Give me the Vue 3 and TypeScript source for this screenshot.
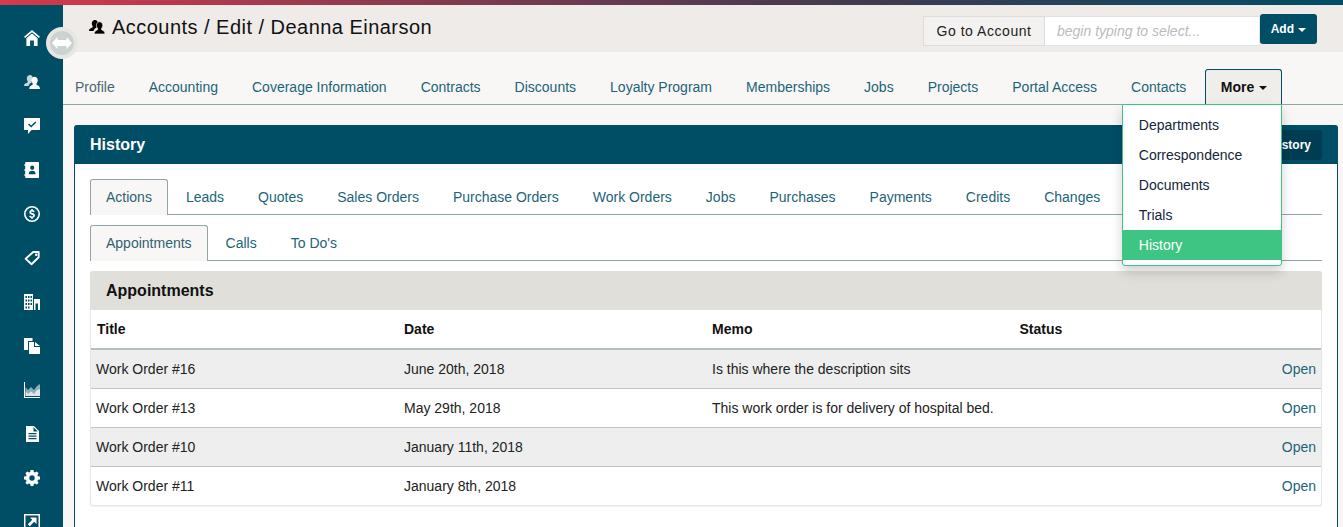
<script setup lang="ts">
interface SideIcon {
  name: string
  box: string
  paths: { d: string; fill?: string; opacity?: number; evenodd?: boolean; stroke?: number }[]
}

const usersLeft = 'M6 0c1.700 0 2.900 1.400 2.900 3.200 0 1-.4 2-1 2.800-.4.500-.4 1 0 1.400-1.700.5-2.900 1.700-3.300 3.600H0c0-1.700 1-2.300 2.400-2.900.9-.4 1.300-.7 1.400-1.100.1-.4-.1-.6-.3-1C3 5.300 2.800 4.300 2.800 3.300 2.800 1.400 4.300 0 6 0z'
const usersRight = 'M10.500 1.800c1.900 0 3.300 1.600 3.300 3.500 0 1.100-.4 2.200-1.100 3-.5.600-.4 1.300.2 1.600 1.600.8 3.100 1.300 3.100 4.100H5.200c0-2.800 1.500-3.300 3.100-4.100.6-.3.700-1 .2-1.600-.7-.8-1.100-1.900-1.100-3 0-1.900 1.300-3.500 3.100-3.500z'

const sideIcons: SideIcon[] = [
  { name: 'home', box: '0 0 16 16', paths: [{ d: 'M8 0 16 6.800 14.900 8.100 8 2.200 1.100 8.100 0 6.800z' }, { d: 'M8 3.600 13.600 8.300V16H9.900V10.500H6.100V16H2.400V8.300z' }] },
  { name: 'users', box: '0 0 16 14', paths: [{ d: usersLeft, opacity: 0.78 }, { d: usersRight }] },
  { name: 'check', box: '0 0 16 16', paths: [{ d: 'M.5 0h15c.3 0 .5.200.5.500V11.500c0 .3-.2.500-.5.500H7.500L4 16V12H.5C.2 12 0 11.800 0 11.500V.5C0 .2.200 0 .5 0zM11.300 3.600 7.200 7.600 5 5.600 4 6.600 7.200 9.600 12.300 4.600z', evenodd: true }] },
  { name: 'contacts', box: '0 0 16 16', paths: [{ d: 'M2 0H14.200c.5 0 .8.300.8.800V15.200c0 .5-.3.800-.8.800H2c-.5 0-.8-.3-.8-.8V13.500H0V12.500H1.200V8.500H0V7.500H1.200V3.500H0V2.500H1.200V.8C1.200.3 1.500 0 2 0zM8.200 3.600C7 3.600 6.200 4.500 6.200 5.700S7 7.800 8.200 7.800 10.200 6.900 10.200 5.700 9.400 3.600 8.200 3.600zM4.800 12.200H11.600C11.600 9.800 10.200 8.800 8.200 8.800S4.800 9.800 4.800 12.200z', evenodd: true }] },
  { name: 'dollar', box: '0 0 16 16', paths: [{ d: 'M8 0a8 8 0 1 1 0 16A8 8 0 0 1 8 0zM8 1.600a6.400 6.400 0 1 0 0 12.800A6.400 6.400 0 0 0 8 1.600zM7.300 3H8.700V4.100C9.700 4.300 10.500 4.800 10.800 5.500L9.700 6.300C9.300 5.700 8.700 5.400 8 5.400 7.300 5.400 6.900 5.700 6.900 6.100 6.900 6.600 7.400 6.800 8.400 7.100 9.800 7.500 10.900 8 10.900 9.500 10.900 10.700 10 11.500 8.700 11.800V13H7.300V11.800C6.200 11.600 5.400 11 5 10.200L6.100 9.400C6.600 10.100 7.300 10.500 8 10.500 8.800 10.500 9.300 10.200 9.300 9.700 9.300 9.200 8.700 9 7.700 8.700 6.400 8.300 5.300 7.800 5.300 6.300 5.300 5.200 6.100 4.400 7.300 4.100z', evenodd: true }] },
  { name: 'tag', box: '0 0 17 16', paths: [{ d: 'M9.800 1.600H15.600V7.200L8 14.600 1.800 8.800z', stroke: 2 }, { d: 'M12.900 3.200a1.300 1.300 0 1 1 0 2.600 1.300 1.300 0 0 1 0-2.600z' }] },
  { name: 'building', box: '0 0 16 16', paths: [{ d: 'M0 0H9V16H0zM1.500 2V4H3V2zM4 2V4H5.500V2zM6.500 2V4H8V2zM1.500 5.500V7.500H3V5.500zM4 5.500V7.500H5.500V5.500zM6.500 5.500V7.500H8V5.500zM1.500 9V11H3V9zM4 9V11H5.500V9zM6.500 9V11H8V9zM1.500 12.500V14.500H3V12.500zM4 12.500V14.500H5.500V12.500z', evenodd: true }, { d: 'M10 5H16V16H14V9.500H11.500V16H10z' }] },
  { name: 'copy', box: '0 0 16 16', paths: [{ d: 'M0 0H8.500V3H4V12H0z' }, { d: 'M5 4H10V9H16V16H5zM11 4 16 8H11z' }] },
  { name: 'chart', box: '0 0 16 16', paths: [{ d: 'M0 0H1V15H16V16H0z' }, { d: 'M1.500 5 4 8 7 5 10 8 13 4 16 2V14H1.500z', opacity: 0.55 }, { d: 'M1.500 9 4 12 7 9.500 10 12 13 8 16 7V14H1.500z', opacity: 0.7 }] },
  { name: 'doc', box: '0 0 16 16', paths: [{ d: 'M2 0H10L15 5V16H2zM4.500 7V8.200H12.500V7zM4.500 9.500V10.700H12.500V9.500zM4.500 12V13.200H12.500V12zM9.500 1.200V5.500H13.800z', evenodd: true }] },
  { name: 'gear', box: '0 0 16 16', paths: [{ d: 'M6.600 0H9.400L9.800 2.100 10.900 2.600 12.800 1.400 14.600 3.200 13.400 5.100 13.900 6.200 16 6.600V9.400L13.900 9.800 13.400 10.900 14.600 12.800 12.800 14.600 10.900 13.400 9.800 13.900 9.400 16H6.600L6.200 13.900 5.100 13.400 3.200 14.600 1.400 12.800 2.600 10.900 2.100 9.800 0 9.400V6.600L2.100 6.200 2.600 5.100 1.400 3.200 3.200 1.400 5.100 2.600 6.200 2.100zM8 5.300a2.700 2.700 0 1 0 0 5.400 2.700 2.700 0 0 0 0-5.400z', evenodd: true }] },
  { name: 'external', box: '0 0 16 16', paths: [{ d: 'M0 0H16V16H0zM1.500 1.500V14.500H14.500V1.500zM6 3.500H12.500V10L10.200 7.800 5.800 12.200 3.800 10.200 8.200 5.800z', evenodd: true }] },
]

const mainTabs = ['Profile', 'Accounting', 'Coverage Information', 'Contracts', 'Discounts', 'Loyalty Program', 'Memberships', 'Jobs', 'Projects', 'Portal Access', 'Contacts']
const moreItems = ['Departments', 'Correspondence', 'Documents', 'Trials', 'History']
const historyTabs = ['Actions', 'Leads', 'Quotes', 'Sales Orders', 'Purchase Orders', 'Work Orders', 'Jobs', 'Purchases', 'Payments', 'Credits', 'Changes']
const actionTabs = ['Appointments', 'Calls', "To Do's"]

const rows = [
  { title: 'Work Order #16', date: 'June 20th, 2018', memo: 'Is this where the description sits', status: 'Open' },
  { title: 'Work Order #13', date: 'May 29th, 2018', memo: 'This work order is for delivery of hospital bed.', status: 'Open' },
  { title: 'Work Order #10', date: 'January 11th, 2018', memo: '', status: 'Open' },
  { title: 'Work Order #11', date: 'January 8th, 2018', memo: '', status: 'Open' },
]
</script>

<template>
  <div class="app">
    <div class="top-strip"></div>
    <div class="shell">
      <aside class="sidebar">
        <a v-for="icon in sideIcons" :key="icon.name" class="side-link">
          <svg :viewBox="icon.box" width="16" height="16" fill="#fff">
            <path
              v-for="(p, i) in icon.paths"
              :key="i"
              :d="p.d"
              :opacity="p.opacity"
              :fill-rule="p.evenodd ? 'evenodd' : undefined"
              :fill="p.stroke ? 'none' : undefined"
              :stroke="p.stroke ? '#fff' : undefined"
              :stroke-width="p.stroke"
              stroke-linejoin="round"
            />
          </svg>
        </a>
      </aside>
      <div class="toggle">
        <svg viewBox="0 0 20 12" width="20" height="12" fill="#fff">
          <path d="M0 6 5.500 0V3H14.500V0L20 6 14.500 12V9H5.500V12z" />
        </svg>
      </div>
      <main class="content">
        <header class="page-head">
          <h1 class="page-title">
            <svg viewBox="0 0 16 14" width="16" height="14" fill="#000">
              <path :d="usersLeft" />
              <path :d="usersRight" stroke="#eeebe8" stroke-width=".7" />
            </svg>
            Accounts / Edit / Deanna Einarson
          </h1>
          <div class="head-tools">
            <div class="goto">
              <span class="goto-label">Go to Account</span>
              <input class="goto-input" placeholder="begin typing to select..." />
            </div>
            <button class="add-btn">Add <span class="caret"></span></button>
          </div>
        </header>
        <nav class="main-nav">
          <ul class="main-tabs">
            <li v-for="tab in mainTabs" :key="tab" class="main-tab">{{ tab }}</li>
            <li class="main-tab more">
              More <span class="caret dark"></span>
              <ul class="more-menu">
                <li v-for="item in moreItems" :key="item" :class="{ current: item === 'History' }">{{ item }}</li>
              </ul>
            </li>
          </ul>
        </nav>
        <section class="panel">
          <div class="panel-head">
            <h2>History</h2>
            <button class="panel-btn">New History</button>
          </div>
          <div class="panel-body">
            <ul class="tabs">
              <li v-for="(tab, i) in historyTabs" :key="tab" class="tab" :class="{ active: i === 0 }">{{ tab }}</li>
            </ul>
            <ul class="tabs sub">
              <li v-for="(tab, i) in actionTabs" :key="tab" class="tab" :class="{ active: i === 0 }">{{ tab }}</li>
            </ul>
            <div class="card">
              <h3 class="card-head">Appointments</h3>
              <table class="grid">
                <thead>
                  <tr>
                    <th>Title</th>
                    <th>Date</th>
                    <th>Memo</th>
                    <th>Status</th>
                  </tr>
                </thead>
                <tbody>
                  <tr v-for="row in rows" :key="row.title">
                    <td>{{ row.title }}</td>
                    <td>{{ row.date }}</td>
                    <td>{{ row.memo }}</td>
                    <td class="status">{{ row.status }}</td>
                  </tr>
                </tbody>
              </table>
            </div>
          </div>
        </section>
      </main>
    </div>
  </div>
</template>

<style>
html,
body {
  margin: 0;
  height: 100%;
  overflow: hidden;
  background: #f8f7f5;
}
</style>

<style scoped>
.app {
  position: relative;
  height: 527px;
  overflow: hidden;
  font-family: "Liberation Sans", Arial, sans-serif;
  font-size: 14px;
  color: #1a1a1a;
}

.top-strip {
  height: 5px;
  background: linear-gradient(90deg, #d8394b 0%, #7d3a50 35%, #3f3a50 65%, #004d66 100%);
}

.shell {
  display: flex;
  height: 522px;
}

.sidebar {
  flex: 0 0 63px;
  background: #004d66;
  display: flex;
  flex-direction: column;
  align-items: center;
  padding-top: 11px;
  box-sizing: border-box;
}

.side-link {
  display: flex;
  align-items: center;
  justify-content: center;
  height: 44px;
  flex: none;
}

.toggle {
  position: absolute;
  left: 46px;
  top: 27px;
  width: 24px;
  height: 24px;
  border: 4px solid #e6e6e3;
  border-radius: 50%;
  background: #ccd2d1;
  display: flex;
  align-items: center;
  justify-content: center;
  z-index: 3;
}

.content {
  flex: 1;
  min-width: 0;
}

.page-head {
  height: 47px;
  background: #eeebe8;
  display: flex;
  justify-content: space-between;
  align-items: flex-start;
  padding: 0 26px 0 26px;
}

.page-title {
  margin: 10px 0 0;
  font-size: 20px;
  font-weight: 400;
  line-height: 24px;
  color: #111;
  letter-spacing: 0.47px;
  display: flex;
  align-items: center;
  gap: 7px;
}

.head-tools {
  display: flex;
  align-items: flex-start;
  margin-top: 9px;
}

.goto {
  display: flex;
  margin-top: 2px;
  height: 30px;
  box-sizing: border-box;
}

.goto-label {
  width: 122px;
  box-sizing: border-box;
  border: 1px solid #dcdcdc;
  background: #f3f2f0;
  text-align: center;
  line-height: 28px;
  letter-spacing: 0.55px;
  color: #222;
}

.goto-input {
  width: 215px;
  box-sizing: border-box;
  border: 1px solid #e2e2e2;
  border-left: 0;
  background: #fff;
  padding: 0 12px;
  font: italic 14px "Liberation Sans", Arial, sans-serif;
  outline: none;
}

.goto-input::placeholder {
  color: #bbb;
  opacity: 1;
}

.add-btn {
  width: 57px;
  height: 30px;
  border: 0;
  border-radius: 3px;
  background: #004d66;
  color: #fff;
  font: bold 12px "Liberation Sans", Arial, sans-serif;
  padding: 0;
}

.caret {
  display: inline-block;
  width: 0;
  height: 0;
  margin-left: 1px;
  vertical-align: middle;
  border-top: 4px solid #fff;
  border-left: 4px solid transparent;
  border-right: 4px solid transparent;
}

.caret.dark {
  border-top-color: #111;
}

.main-nav {
  height: 53px;
  box-sizing: border-box;
  border-bottom: 1px solid #92a5a8;
  background: #f8f7f5;
  padding-top: 17px;
}

.main-tabs {
  list-style: none;
  margin: 0 0 0 -4px;
  padding: 0;
  display: flex;
  gap: 2.03px;
}

.main-tab {
  position: relative;
  padding: 0 16px;
  height: 36px;
  line-height: 36px;
  color: #1d6478;
  white-space: nowrap;
  flex: none;
}

.main-tab:first-child {
  color: #4a6670;
}

.main-tab.more {
  box-sizing: border-box;
  width: 77px;
  margin-left: .4px;
  padding: 0 0 0 15px;
  border: 1px solid #004d66;
  border-bottom: 0;
  border-radius: 3px 3px 0 0;
  background: #f0eeeb;
  color: #111;
  font-weight: 700;
  line-height: 35px;
}

.more-menu {
  position: absolute;
  top: 34px;
  right: -1px;
  width: 160px;
  box-sizing: border-box;
  margin: 0;
  padding: 5px 0;
  list-style: none;
  background: #fff;
  border: 1px solid #3ec583;
  border-radius: 0 0 3px 3px;
  box-shadow: 0 6px 12px rgba(0, 0, 0, 0.18);
  font-weight: 400;
  z-index: 5;
}

.more-menu li {
  height: 30px;
  line-height: 30px;
  padding-left: 16px;
  color: #14263a;
}

.more-menu li.current {
  background: #3ec583;
  color: #fff;
}

.panel {
  height: 402px;
  box-sizing: border-box;
  margin: 20px 5px 0 11px;
  background: #fff;
  border: 1px solid #004d66;
  border-bottom: 0;
  border-radius: 3px 3px 0 0;
}

.panel-head {
  height: 38px;
  background: #004d66;
  display: flex;
  align-items: center;
  justify-content: space-between;
  padding: 0 15px;
}

.panel-head h2 {
  margin: 0;
  font-size: 16px;
  font-weight: 700;
  color: #fff;
}

.panel-btn {
  height: 30px;
  padding: 0 11px;
  border: 0;
  border-radius: 3px;
  background: #003d52;
  color: #fff;
  font: bold 12px "Liberation Sans", Arial, sans-serif;
}

.panel-body {
  padding: 15px 15px 0;
}

.tabs {
  list-style: none;
  margin: 0;
  padding: 0;
  display: flex;
  gap: 2px;
  height: 36px;
  box-sizing: border-box;
  border-bottom: 1px solid #92a5a8;
}

.tabs.sub {
  margin-top: 10px;
}

.tab {
  box-sizing: border-box;
  height: 35px;
  padding: 0 16px;
  line-height: 36px;
  color: #1d6478;
  white-space: nowrap;
}

.tab.active {
  height: 36px;
  padding: 0 15px;
  border: 1px solid #92a5a8;
  border-bottom: 0;
  border-radius: 3px 3px 0 0;
  background: #f8f7f5;
  color: #2f6173;
  line-height: 35px;
}

.card {
  margin-top: 10px;
  border: 1px solid #e6e6e4;
  border-top: 0;
  border-radius: 3px;
  box-shadow: 0 1px 2px rgba(0, 0, 0, 0.06);
}

.card-head {
  margin: 0 -1px;
  height: 39px;
  line-height: 39px;
  padding-left: 16px;
  background: #e0dfda;
  font-size: 16px;
  font-weight: 700;
  color: #111;
  border-radius: 3px 3px 0 0;
}

.grid {
  width: 100%;
  table-layout: fixed;
  border-collapse: collapse;
}

.grid th {
  height: 39px;
  padding: 0 6px 1px;
  text-align: left;
  font-weight: 700;
  color: #111;
  border-bottom: 2px solid #b5bfc0;
  box-sizing: border-box;
}

.grid td {
  height: 39px;
  padding: 0 5px;
  box-sizing: border-box;
  color: #222;
  border-bottom: 1px solid #bcc4c6;
}

.grid td + td {
  padding-left: 6px;
}

.grid th:nth-child(2),
.grid td:nth-child(2) {
  padding-left: 5.5px;
}

.grid tbody tr:nth-child(odd) td {
  background: #eeeeee;
}

.grid tbody tr:last-child td {
  border-bottom: 0;
}

.grid .status {
  text-align: right;
  color: #1d6478;
}
</style>
